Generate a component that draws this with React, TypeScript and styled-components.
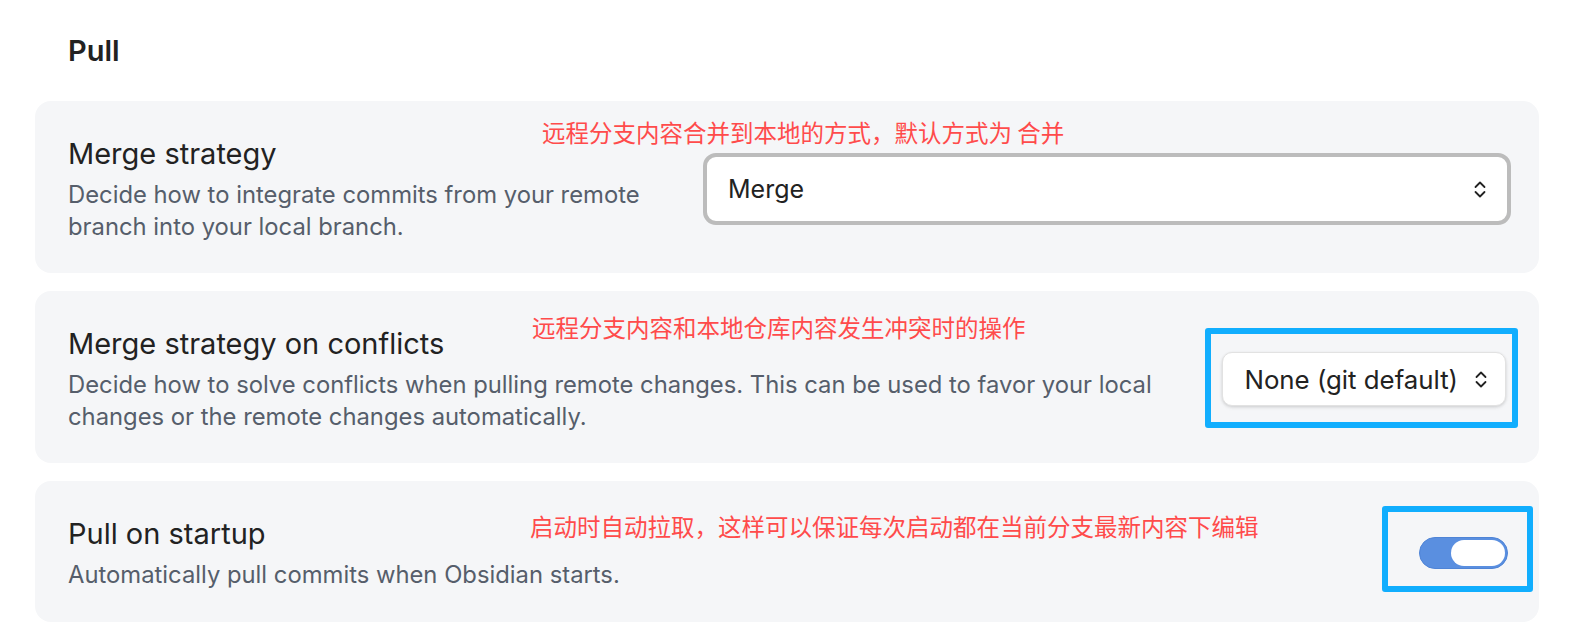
import React from "react";
import styled, { createGlobalStyle } from "styled-components";

const Global = createGlobalStyle`
  html, body { margin: 0; padding: 0; background: #ffffff; }
  body { font-family: Inter, "Noto Sans", "Noto Sans CJK SC", sans-serif; -webkit-font-smoothing: antialiased; }
`;

const Page = styled.div`
  width: 1590px;
  box-sizing: border-box;
  padding: 33px 51px 20px 35px;
  display: flex;
  flex-direction: column;
`;

const Heading = styled.h2`
  margin: 0 0 32px 33px;
  font-size: 29px;
  line-height: 36px;
  font-weight: 600;
  color: #222222;
`;

const List = styled.div`
  display: flex;
  flex-direction: column;
  gap: 18px;
`;

const Card = styled.div<{ $padRight: number }>`
  position: relative;
  display: flex;
  align-items: center;
  gap: 24px;
  padding: 35px ${(p) => p.$padRight}px 31px 33px;
  background: #f5f6f8;
  border-radius: 16px;
`;

const Info = styled.div`
  flex: 1 1 auto;
  min-width: 0;
  display: flex;
  flex-direction: column;
  gap: 7px;
`;

const Name = styled.div`
  font-size: 29px;
  line-height: 36px;
  color: #222222;
`;

const Desc = styled.div`
  font-size: 23.8px;
  line-height: 31.5px;
  color: #565e6b;
`;

const Control = styled.div`
  position: relative;
  flex: 0 0 auto;
  display: flex;
  justify-content: flex-end;
`;

const Note = styled.div<{ $left: number; $top: number }>`
  position: absolute;
  left: ${(p) => p.$left}px;
  top: ${(p) => p.$top}px;
  font-family: "Noto Sans CJK SC", sans-serif;
  font-size: 23.5px;
  line-height: 28px;
  color: #ff4b4b;
  white-space: nowrap;
  pointer-events: none;
`;

const Highlight = styled.div<{ $t: number; $r: number; $b: number; $l: number }>`
  position: absolute;
  top: -${(p) => p.$t}px;
  right: -${(p) => p.$r}px;
  bottom: -${(p) => p.$b}px;
  left: -${(p) => p.$l}px;
  border: 6px solid #11aefe;
  border-radius: 3px;
  pointer-events: none;
`;

const WideSelect = styled.div`
  width: 808px;
  height: 72px;
  box-sizing: border-box;
  display: flex;
  align-items: center;
  justify-content: space-between;
  padding: 0 20px 0 21px;
  background: #ffffff;
  border: 4px solid #bcbcbc;
  border-radius: 13px;
  font-size: 25px;
  color: #222222;
`;

const SmallSelect = styled.div`
  height: 54px;
  box-sizing: border-box;
  display: flex;
  align-items: center;
  gap: 16px;
  padding: 0 17px 0 21px;
  background: #ffffff;
  border: 1px solid #e2e2e2;
  border-radius: 10px;
  box-shadow: 0 1px 3px rgba(0, 0, 0, 0.12), 0 2px 4px rgba(0, 0, 0, 0.05);
  font-size: 25.8px;
  color: #222222;
`;

const Toggle = styled.div`
  width: 89px;
  height: 32px;
  box-sizing: border-box;
  display: flex;
  align-items: center;
  justify-content: flex-end;
  padding: 2px;
  background: #5a8fe0;
  border: 1.5px solid #4f84d6;
  border-radius: 16px;
`;

const Knob = styled.div`
  width: 54px;
  height: 26px;
  background: #ffffff;
  border-radius: 13px;
`;

const Chevrons = () => (
  <svg width="14" height="21" viewBox="0 0 14 21" fill="none" stroke="#222" strokeWidth="1.8" strokeLinecap="round" strokeLinejoin="round">
    <path d="M2.5 8 L7 3.5 L11.5 8" />
    <path d="M2.5 13 L7 17.5 L11.5 13" />
  </svg>
);

export default function App() {
  return (
    <>
      <Global />
      <Page>
        <Heading>Pull</Heading>
        <List>
          <Card $padRight={28}>
            <Note $left={507} $top={16.5}>远程分支内容合并到本地的方式，默认方式为 合并</Note>
            <Info>
              <Name>Merge strategy</Name>
              <Desc>Decide how to integrate commits from your remote branch into your local branch.</Desc>
            </Info>
            <Control>
              <WideSelect>
                <span>Merge</span>
                <Chevrons />
              </WideSelect>
            </Control>
          </Card>
          <Card $padRight={33}>
            <Note $left={497} $top={21.5}>远程分支内容和本地仓库内容发生冲突时的操作</Note>
            <Info>
              <Name>Merge strategy on conflicts</Name>
              <Desc>Decide how to solve conflicts when pulling remote changes. This can be used to favor your local changes or the remote changes automatically.</Desc>
            </Info>
            <Control>
              <SmallSelect>
                <span>None (git default)</span>
                <Chevrons />
              </SmallSelect>
              <Highlight $t={24} $r={12} $b={22} $l={17} />
            </Control>
          </Card>
          <Card $padRight={31}>
            <Note $left={495} $top={30.5}>启动时自动拉取，这样可以保证每次启动都在当前分支最新内容下编辑</Note>
            <Info>
              <Name>Pull on startup</Name>
              <Desc>Automatically pull commits when Obsidian starts.</Desc>
            </Info>
            <Control>
              <Toggle>
                <Knob />
              </Toggle>
              <Highlight $t={31} $r={25} $b={23} $l={37} />
            </Control>
          </Card>
        </List>
      </Page>
    </>
  );
}
